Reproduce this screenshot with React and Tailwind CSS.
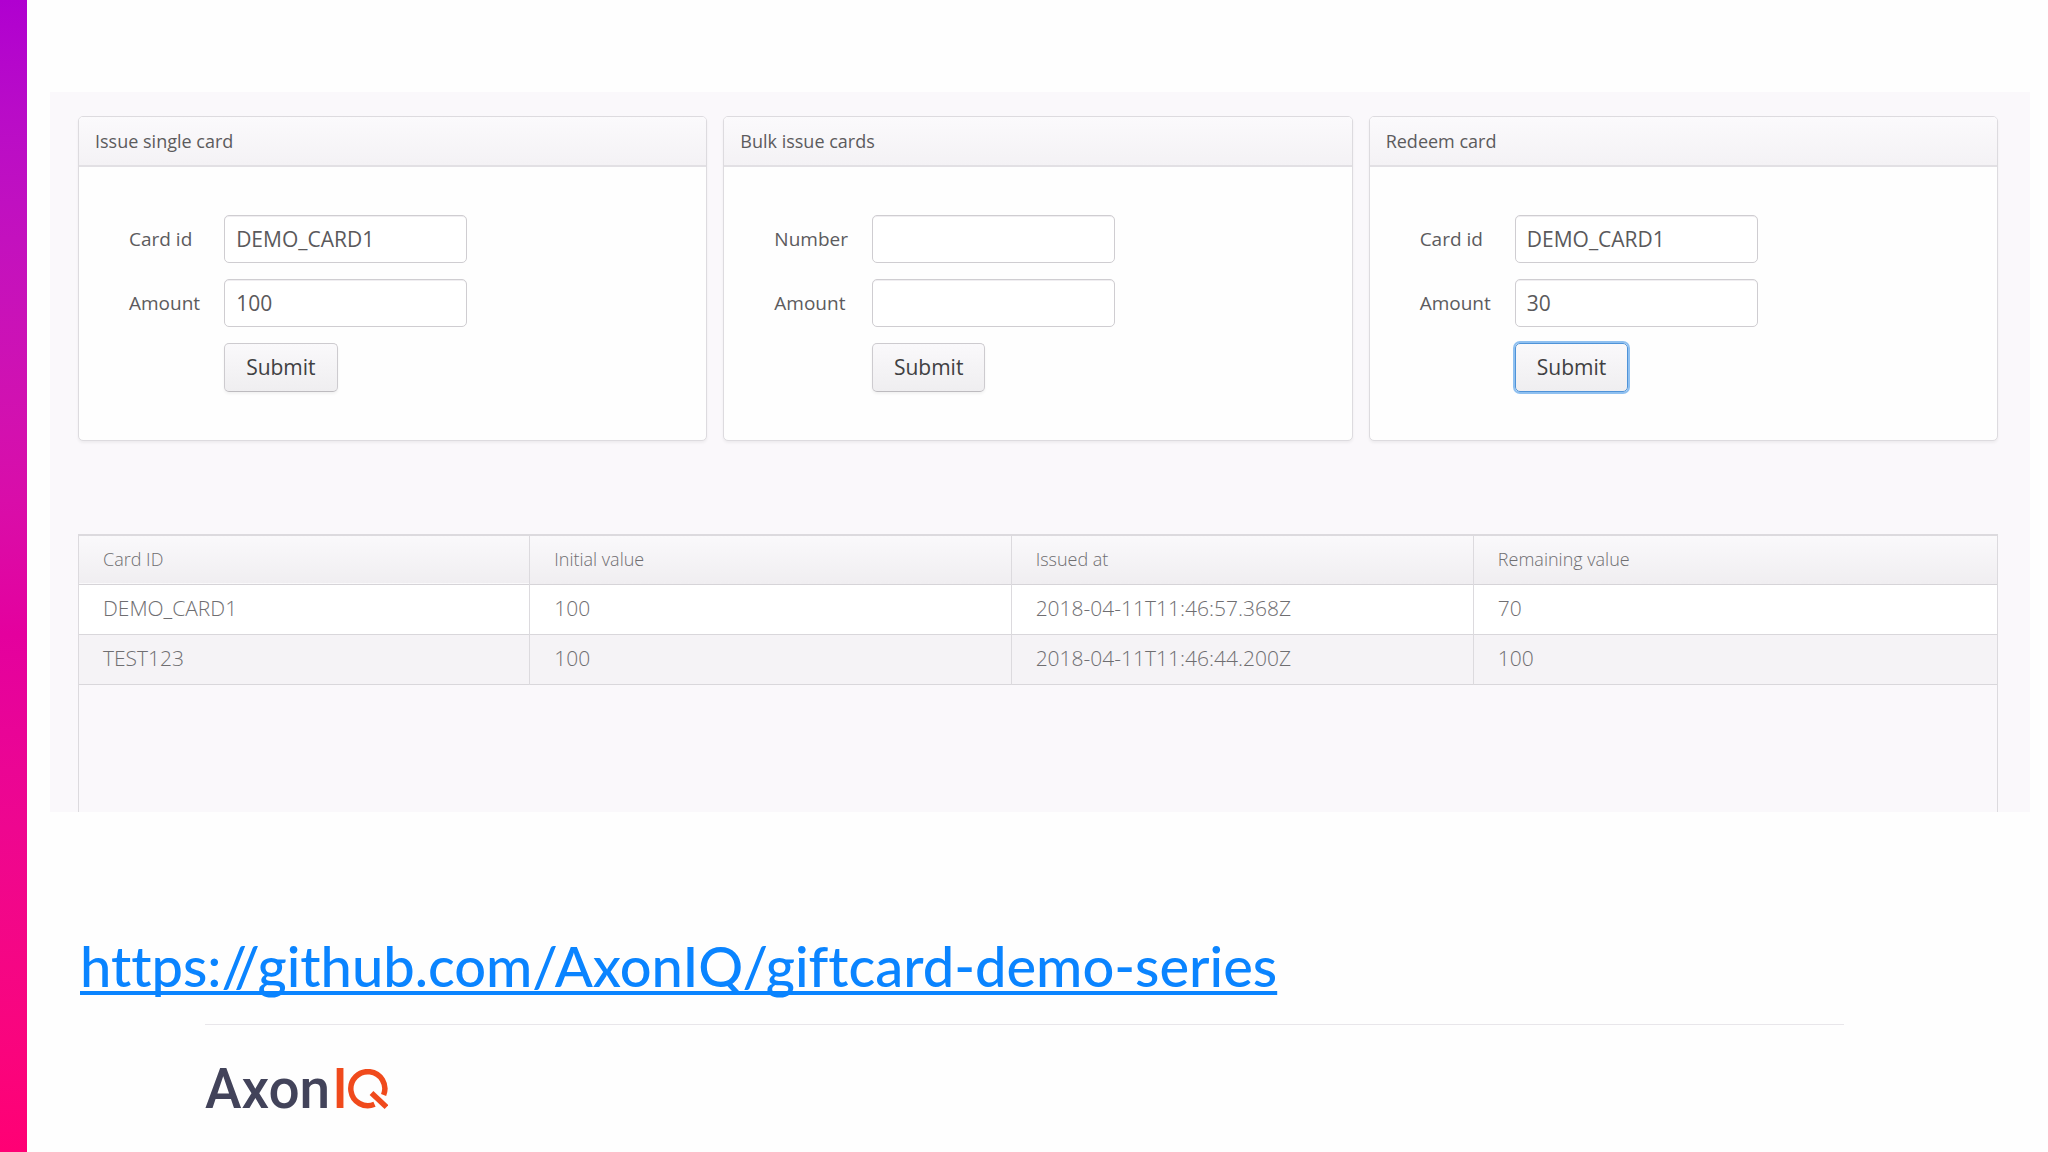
import React, { useId, useState } from 'react';
import clsx from 'clsx';

const PANELS = [
  {
    title: 'Issue single card',
    submitFocused: false,
    fields: [
      { label: 'Card id', value: 'DEMO_CARD1' },
      { label: 'Amount', value: '100' },
    ],
  },
  {
    title: 'Bulk issue cards',
    submitFocused: false,
    fields: [
      { label: 'Number', value: '' },
      { label: 'Amount', value: '' },
    ],
  },
  {
    title: 'Redeem card',
    submitFocused: true,
    fields: [
      { label: 'Card id', value: 'DEMO_CARD1' },
      { label: 'Amount', value: '30' },
    ],
  },
];

const COLUMNS = [
  { label: 'Card ID', width: 'w-[23.5%]' },
  { label: 'Initial value', width: 'w-[25.1%]' },
  { label: 'Issued at', width: 'w-[24.1%]' },
  { label: 'Remaining value', width: '' },
];

const CARDS = [
  ['DEMO_CARD1', '100', '2018-04-11T11:46:57.368Z', '70'],
  ['TEST123', '100', '2018-04-11T11:46:44.200Z', '100'],
];

function Field({ label, initialValue }) {
  const id = useId();
  const [value, setValue] = useState(initialValue);

  return (
    <>
      <label htmlFor={id} className="text-[19px] text-[#5c5b5d]">{label}</label>
      <input
        id={id}
        type="text"
        value={value}
        onChange={e => setValue(e.target.value)}
        className="h-12 w-[243px] rounded-[5px] border border-[#cfcdd1] bg-white px-[11px] text-[21px] text-[#5a595b] shadow-[inset_0_1px_0_#f0eef1] focus:outline-none"
      />
    </>
  );
}

function FormPanel({ title, fields, submitFocused }) {
  return (
    <section className="min-w-0 flex-1 rounded-[5px] border border-[#dddbdf] bg-[#fefefe] shadow-[0_2px_3px_rgba(0,0,0,0.05)]">
      <h2 className="flex h-[50px] items-center rounded-t-[4px] border-b-2 border-[#e2e0e4] bg-linear-to-b from-[#fbfafc] to-[#f4f2f5] px-4 text-[18px] text-[#5c5b5d]">
        {title}
      </h2>
      <form
        onSubmit={e => e.preventDefault()}
        className="grid grid-cols-[max-content_1fr] items-center gap-x-6 gap-y-4 px-[50px] py-12"
      >
        {fields.map(field => (
          <Field key={field.label} label={field.label} initialValue={field.value} />
        ))}
        <button
          type="submit"
          className={clsx(
            "col-start-2 h-[49px] justify-self-start rounded-[5px] border bg-linear-to-b from-[#faf9fb] to-[#efeef0] px-[21px] text-[21px] text-[#404042]",
            submitFocused
              ? "border-[#4f93d8] shadow-[0_0_0_2px_#8fc0f0]"
              : "border-[#cdcbcf] border-b-[#bdbbbf] shadow-[0_2px_3px_rgba(0,0,0,0.05)]"
          )}
        >
          Submit
        </button>
      </form>
    </section>
  );
}

function CardTable() {
  return (
    <div className="h-[278px] border-x border-t-2 border-[#dcdade]">
      <table className="w-full table-fixed border-collapse text-left font-light text-[#6f6e71]">
        <thead>
          <tr className="h-12 border-b border-[#d6d4d8] bg-linear-to-b from-[#faf9fb] to-[#f0eef1]">
            {COLUMNS.map(col => (
              <th
                key={col.label}
                scope="col"
                className={clsx("border-r border-[#dcdade] px-6 text-[18px] font-light last:border-r-0", col.width)}
              >
                {col.label}
              </th>
            ))}
          </tr>
        </thead>
        <tbody>
          {CARDS.map(row => (
            <tr key={row[0]} className="h-[50px] border-b border-[#d9d7db] bg-white even:bg-[#f5f3f6]">
              {row.map((cell, i) => (
                <td key={i} className="border-r border-[#dcdade] px-6 text-[21px] last:border-r-0">{cell}</td>
              ))}
            </tr>
          ))}
        </tbody>
      </table>
    </div>
  );
}

function Logo() {
  return (
    <div className="flex items-center font-['Roboto',sans-serif] text-[55px] leading-[64px] font-medium">
      <span className="text-[#42435a]">Axon</span>
      <span className="ml-0.5 text-[#f04a1c]">I</span>
      <svg viewBox="0 0 40 40" className="size-10" fill="none" stroke="#f04a1c" strokeWidth="5.5">
        <path d="M26.5 35.3 A17 17 0 1 1 35.6 26" />
        <path d="M23.5 24 L38.5 38" />
      </svg>
    </div>
  );
}

export default function App() {
  return (
    <div className="flex min-h-screen bg-[#fefefe] font-['Open_Sans',sans-serif]">
      <div className="w-[27px] shrink-0 bg-linear-to-b from-[#b000d0] via-[#e4009e] via-55% to-[#ff0074]" />

      <div className="min-w-0 flex-1 pt-[92px]">
        <main className="ml-[23px] mr-[18px] bg-[#faf8fb] pl-7 pr-8 pt-6">
          <div className="flex gap-4">
            {PANELS.map(panel => (
              <FormPanel key={panel.title} {...panel} />
            ))}
          </div>
          <div className="mt-[93px]">
            <CardTable />
          </div>
        </main>

        <a
          href="https://github.com/AxonIQ/giftcard-demo-series"
          className="ml-[53px] mt-[118px] inline-block font-['Lato',sans-serif] text-[56px] leading-[72px] font-medium text-[#0a84ff] underline decoration-4 underline-offset-4 [font-variant-ligatures:none] [text-decoration-skip-ink:none]"
        >
          https://github.com/AxonIQ/giftcard-demo-series
        </a>

        <footer className="ml-[178px] mr-[204px] mt-[22px] border-t border-[#e8e6ea] pt-8">
          <Logo />
        </footer>
      </div>
    </div>
  );
}
